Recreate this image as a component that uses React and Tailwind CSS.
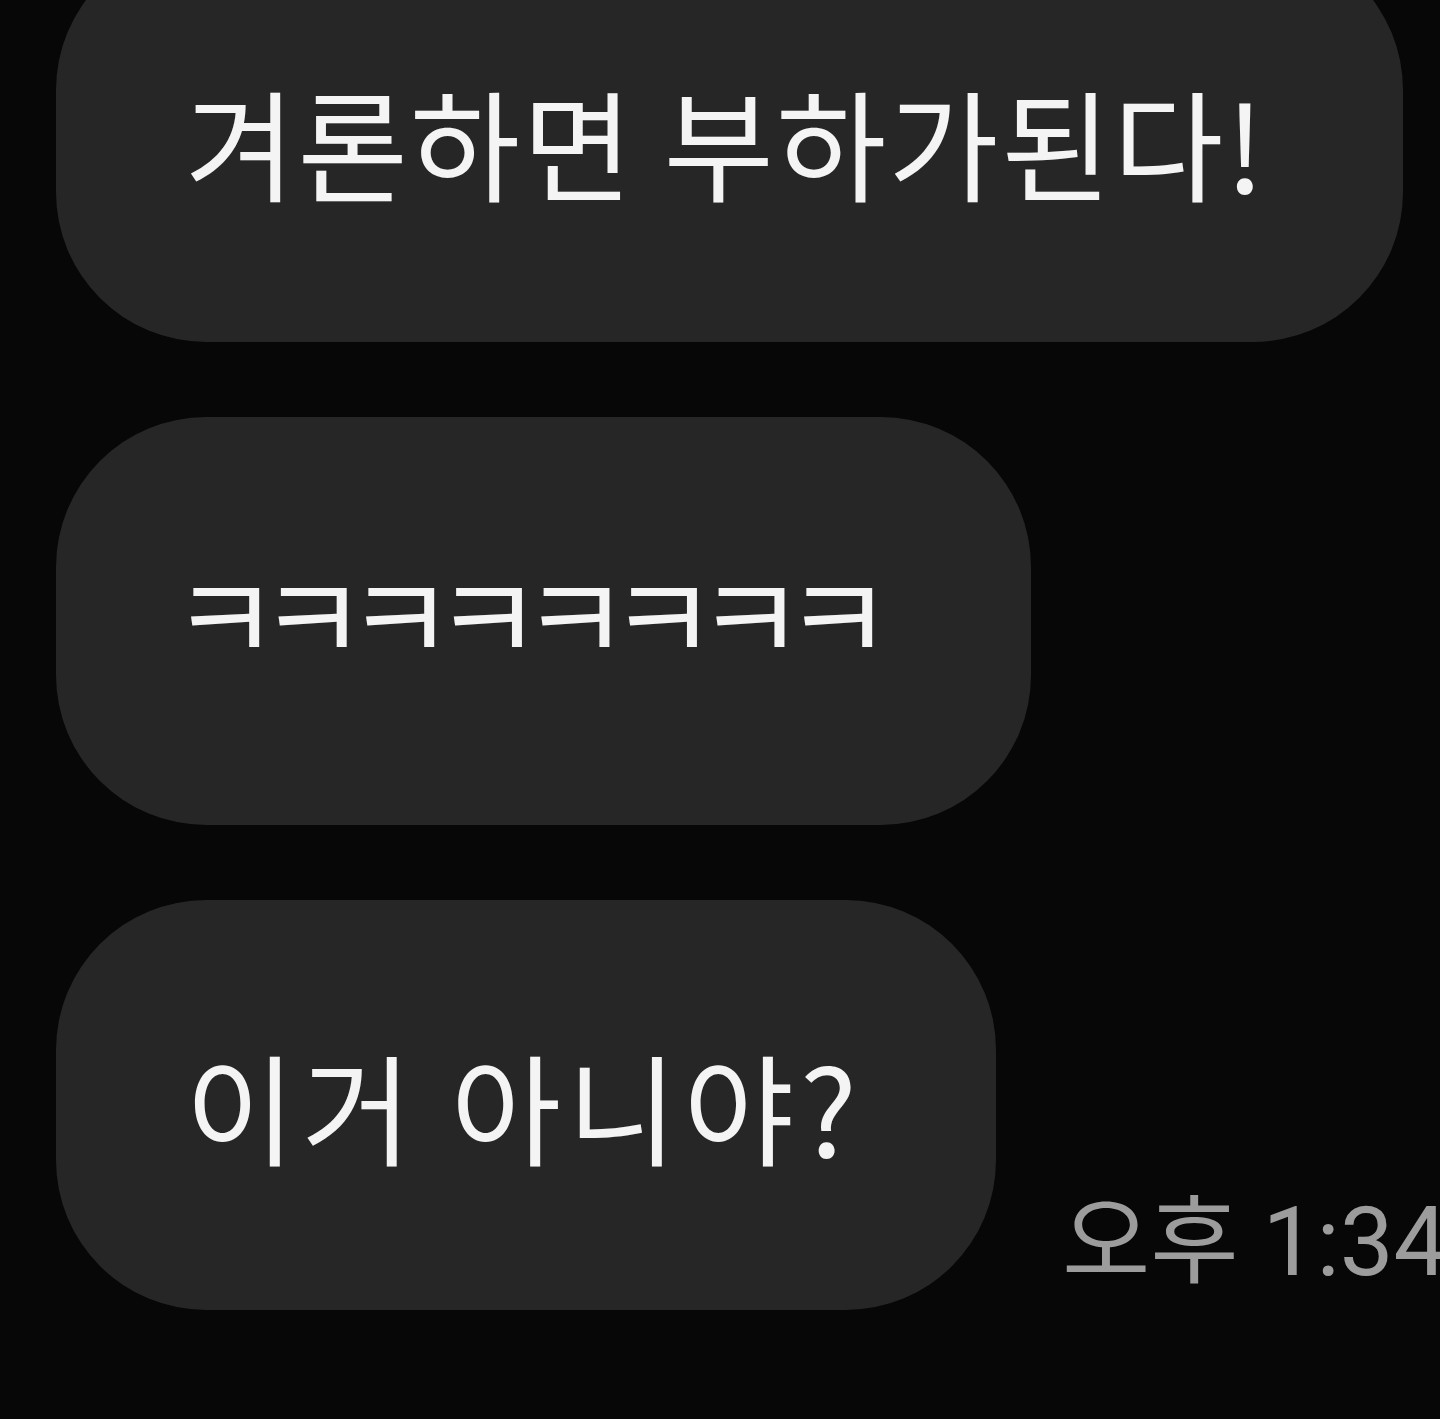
import React from "react";

const KR = "font-['Noto_Sans_CJK_KR','Noto_Sans',sans-serif]";

function Bubble({ className, textClass, children }) {
  return (
    <div
      className={`flex items-center shrink-0 bg-[#262626] rounded-[150px] pl-[129px] ${className}`}
    >
      <span className={`${KR} text-[#f4f4f4] leading-none whitespace-nowrap ${textClass}`}>
        {children}
      </span>
    </div>
  );
}

export default function App() {
  return (
    <div className="min-h-screen h-[1419px] w-full bg-[#070707] overflow-hidden">
      <div className="flex flex-col gap-[75px] pl-[56px]">
        {/* first bubble runs off the top of the screen */}
        <Bubble className="mt-[-60px] h-[402px] w-[1347px]" textClass="text-[120px] tracking-[2px]">
          겨론하면 부하가된다!
        </Bubble>

        <Bubble className="h-[408px] w-[975px]" textClass="text-[118px] tracking-[-21px] ml-[-14px] pb-[20px]">
          ㅋㅋㅋㅋㅋㅋㅋㅋ
        </Bubble>

        <div className="flex items-end gap-[66px]">
          <Bubble className="h-[410px] w-[940px]" textClass="text-[120px] tracking-[6px]">
            이거 아니야?
          </Bubble>
          <span className="shrink-0 mb-[20px] whitespace-nowrap text-[96px] leading-none text-[#9c9c9c] font-['Roboto','Noto_Sans_CJK_KR',sans-serif]">
            오후 1:34
          </span>
        </div>
      </div>
    </div>
  );
}
